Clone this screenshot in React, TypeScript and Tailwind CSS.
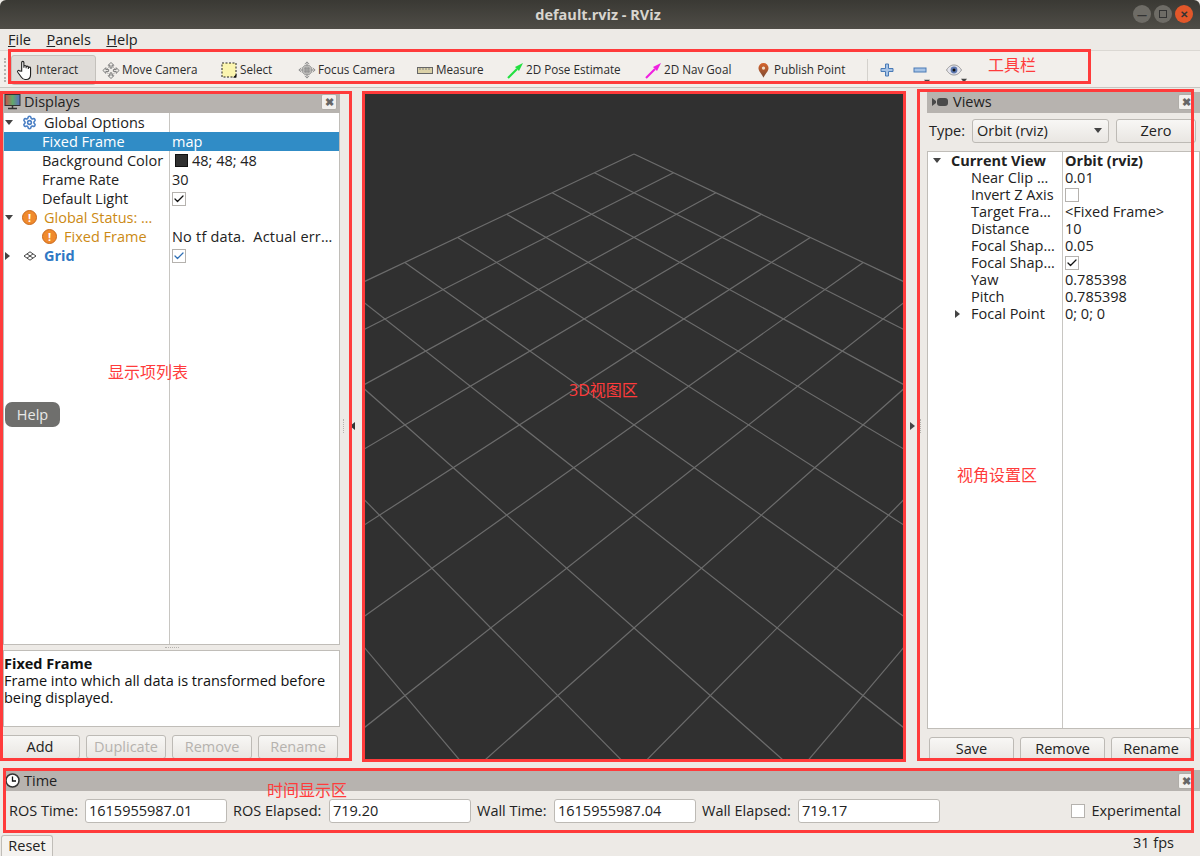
import { ReactNode } from "react";
import { Settings, Check } from "lucide-react";

const FONT = "font-['Open_Sans','Noto_Sans_CJK_SC',sans-serif]";

// projective map of the rviz ground grid, fitted to the picture
const project = (u: number, v: number) => {
  const w = 1 - 0.0333 * (u + v);
  return [270 + (38.2 * (v - u)) / w, 62 + (18.07 * (u + v)) / w];
};

function GroundGrid() {
  const lines = [];
  for (let i = 0; i <= 10; i++) {
    const [ax, ay] = project(i, 0);
    const [bx, by] = project(i, 10);
    const [cx, cy] = project(0, i);
    const [dx, dy] = project(10, i);
    lines.push(<line key={`u${i}`} x1={ax} y1={ay} x2={bx} y2={by} />);
    lines.push(<line key={`v${i}`} x1={cx} y1={cy} x2={dx} y2={dy} />);
  }
  return (
    <svg width="540" height="668" className="block" stroke="#6c6c6c" strokeWidth="1.2">
      {lines}
    </svg>
  );
}

function Hand() {
  return (
    <svg width="19" height="20" viewBox="2 1 15 18" fill="#fff" stroke="#222" strokeWidth="1">
      <path d="M6.500 11V3.200c0-1.300 2-1.300 2 0V8V6.800c0-1.200 2-1.200 2 0V8.500V7.400c0-1.200 2-1.200 2 0V9V8.200c0-1.100 2-1.100 2 0V14c0 2.600-1.600 4.500-4 4.500H9.500c-1.600 0-2.500-.9-3.400-2.200L3 12c-.8-1.200.7-2.200 1.600-1.200z" />
    </svg>
  );
}

function MoveCamera() {
  return (
    <svg width="19" height="19" viewBox="0 0 19 19" fill="#eeece8" stroke="#777" strokeWidth="1">
      <circle cx="9.500" cy="9.500" r="4.500" fill="none" strokeDasharray="1.500 1" />
      <path d="M9.500 1l3 3h-2v3h-2V4h-2zM9.500 18l3-3h-2v-3h-2v3h-2zM1 9.500l3-3v2h3v2H4v2zM18 9.500l-3-3v2h-3v2h3v2z" />
    </svg>
  );
}

function SelectIcon() {
  return (
    <svg width="16" height="16" viewBox="0 0 16 16">
      <rect x="1" y="1" width="14" height="14" fill="#fbf5b0" stroke="#222" strokeDasharray="2 1.500" />
      <path d="M12 15.500L15.500 12V15.500z" fill="#111" />
    </svg>
  );
}

function FocusCamera() {
  return (
    <svg width="20" height="20" viewBox="0 0 20 20" fill="none" stroke="#8a8a8a" strokeWidth="1">
      <circle cx="10" cy="10" r="5.500" fill="#dcdad6" />
      <path d="M10 1v18M1 10h18M7.500 3.500L10 1l2.500 2.500M7.500 16.500L10 19l2.500-2.500M3.500 7.500L1 10l2.500 2.500M16.500 7.500L19 10l-2.500 2.500M6 8h8M6 12h8M8 6v8M12 6v8" />
    </svg>
  );
}

function Ruler() {
  return (
    <svg width="16" height="7" viewBox="0 0 16 7">
      <rect x="0.500" y="0.500" width="15" height="6" fill="#dcd2a8" stroke="#666" />
      <path d="M3 1v2M6 1v2M9 1v2M12 1v2" stroke="#888" />
    </svg>
  );
}

function Arrow({ color }: { color: string }) {
  return (
    <svg width="17" height="17" viewBox="0 0 17 17">
      <path d="M1 16L10 7" stroke={color} strokeWidth="2.200" />
      <path d="M16 1L8 5L12 9z" fill={color} />
    </svg>
  );
}

function Pin() {
  return (
    <svg width="11" height="17" viewBox="0 0 12 17">
      <defs>
        <linearGradient id="pin" x1="0" x2="0" y1="0" y2="1">
          <stop offset="0" stopColor="#d8642c" />
          <stop offset="1" stopColor="#7a4a34" />
        </linearGradient>
      </defs>
      <path d="M6 16.500C4.500 12.500 .500 9.500 .500 5.800a5.500 5.500 0 0111 0C11.500 9.500 7.500 12.500 6 16.500z" fill="url(#pin)" />
      <circle cx="6" cy="5.800" r="1.800" fill="#f0dcc8" />
    </svg>
  );
}

function PlusIcon() {
  return (
    <svg width="14" height="14" viewBox="0 0 14 14">
      <path d="M5.500 1h3v4.500H13v3H8.500V13h-3V8.500H1v-3h4.500z" fill="#a6c3e6" stroke="#4a7ab5" />
    </svg>
  );
}

function MinusIcon() {
  return (
    <svg width="14" height="6" viewBox="0 0 14 6">
      <rect x="1" y="1" width="12" height="4" fill="#a6c3e6" stroke="#4a7ab5" />
    </svg>
  );
}

function EyeIcon() {
  return (
    <svg width="16" height="12" viewBox="0 0 16 12">
      <path d="M.500 6C3 2 5.500 1 8 1s5 1 7.500 5C13 10 10.500 11 8 11S3 10 .500 6z" fill="#e4e4ec" stroke="#999" />
      <circle cx="8" cy="6" r="3.400" fill="#5d78b0" />
      <circle cx="8" cy="6" r="1.500" fill="#111" />
    </svg>
  );
}

function Monitor() {
  return (
    <svg width="17" height="16" viewBox="0 0 17 16">
      <defs>
        <linearGradient id="scr" x1="0" x2="1" y1="0" y2="0">
          <stop offset="0" stopColor="#c9504a" />
          <stop offset="0.500" stopColor="#63a86a" />
          <stop offset="1" stopColor="#5a6cc0" />
        </linearGradient>
      </defs>
      <rect x="1" y="0.500" width="15" height="11" fill="url(#scr)" stroke="#333" />
      <path d="M8.500 12v2M4 14.500h9" stroke="#333" strokeWidth="1.500" />
    </svg>
  );
}

function CameraIcon() {
  return (
    <svg width="16" height="10" viewBox="0 0 16 10" fill="#4a4a4a">
      <path d="M0 1l4 3V6L0 9z" />
      <rect x="5" y="1" width="11" height="8" rx="3" />
    </svg>
  );
}

function ClockIcon() {
  return (
    <svg width="15" height="15" viewBox="0 0 15 15">
      <circle cx="7.500" cy="7.500" r="6.500" fill="#fff" stroke="#333" strokeWidth="1.500" />
      <path d="M7.500 3.500v4.500h3.500" fill="none" stroke="#111" strokeWidth="1.300" />
    </svg>
  );
}

function Warn({ className = "" }: { className?: string }) {
  return (
    <span className={`flex h-[15px] w-[15px] flex-none items-center justify-center rounded-full border border-[#c9691c] bg-[#f08a2c] text-[11px] leading-none font-bold text-white ${className}`}>
      !
    </span>
  );
}

function GridIcon() {
  return (
    <svg width="14" height="10" viewBox="0 0 14 10" fill="none" stroke="#444">
      <path d="M7 .800L13 5L7 9.200L1 5zM4 2.900L10 7.100M10 2.900L4 7.100" />
    </svg>
  );
}

function Down({ className = "" }: { className?: string }) {
  return <span className={`h-0 w-0 flex-none border-x-[4px] border-t-[5px] border-x-transparent border-t-[#444] ${className}`} />;
}

function Right({ className = "" }: { className?: string }) {
  return <span className={`h-0 w-0 flex-none border-y-[4px] border-l-[5px] border-y-transparent border-l-[#444] ${className}`} />;
}

function CloseBox() {
  return (
    <span className="flex h-[16px] w-[16px] flex-none items-center justify-center rounded-[2px] border border-[#b0ada8] bg-[#f2f0ed] text-[11px] leading-none font-bold text-[#666]">
      ✖
    </span>
  );
}

function Dots({ className }: { className: string }) {
  return <span className={`flex-none border-[#b5b2ae] ${className}`} />;
}

function Tool({ icon, label, active, width }: { icon: ReactNode; label: string; active?: boolean; width: string }) {
  return (
    <div className={`flex h-[30px] flex-none items-center gap-[2px] text-[11.7px] text-[#2c2c2c] ${width} ${active ? "rounded-[3px] border border-[#c4c1bc] bg-[#dfdcd8] pl-[4px]" : "pl-[6px]"}`}>
      <span className="flex w-[18px] flex-none justify-center">{icon}</span>
      {label}
    </div>
  );
}

function PanelTitle({ icon, title, className, iconBox = "w-[18px]" }: { icon: ReactNode; title: string; className: string; iconBox?: string }) {
  return (
    <div className={`flex h-[21px] flex-none items-center justify-between bg-[#b7b3af] text-[14.500px] text-[#222] ${className}`}>
      <div className="flex items-center gap-[3px]">
        <span className={`flex justify-center ${iconBox}`}>{icon}</span>
        {title}
      </div>
      <CloseBox />
    </div>
  );
}

function QtButton({ children, disabled, width }: { children: ReactNode; disabled?: boolean; width: string }) {
  return (
    <div className={`flex h-[24px] flex-none items-center justify-center rounded-[3px] border border-[#bdbab5] bg-gradient-to-b from-[#f8f7f5] to-[#e9e6e2] text-[14.500px] ${width} ${disabled ? "text-[#b5b2ae]" : "text-[#222]"}`}>
      {children}
    </div>
  );
}

function Box({ checked, blue }: { checked?: boolean; blue?: boolean }) {
  return (
    <span className="flex h-[14px] w-[14px] flex-none items-center justify-center border border-[#b5b2ae] bg-white">
      {checked && <Check size={12} strokeWidth={2.500} color={blue ? "#2f6fb5" : "#111"} />}
    </span>
  );
}

function DisplayRow({ left, right, indent, selected }: { left: ReactNode; right?: ReactNode; indent: string; selected?: boolean }) {
  return (
    <div className={`flex h-[19px] items-center text-[14.500px] ${selected ? "bg-[#308cc6] text-white" : "text-[#222]"}`}>
      <div className={`flex w-[166px] flex-none items-center overflow-hidden whitespace-pre ${indent}`}>{left}</div>
      <div className="flex min-w-0 flex-1 items-center pl-[2px] whitespace-pre">{right}</div>
    </div>
  );
}

function ViewRow({ left, right, bold, arrow }: { left: string; right: ReactNode; bold?: boolean; arrow?: ReactNode }) {
  return (
    <div className={`flex h-[17px] items-center text-[14.500px] text-[#222] ${bold ? "font-bold" : ""}`}>
      <div className={`relative flex w-[134px] flex-none items-center whitespace-nowrap ${bold ? "pl-[23px]" : "pl-[43px]"}`}>
        {arrow}
        {left}
      </div>
      <div className="flex items-center pl-[3px] whitespace-nowrap">{right}</div>
    </div>
  );
}

function TimeField({ label, value, labelWidth }: { label: string; value: string; labelWidth: string }) {
  return (
    <div className="flex items-center gap-[7px]">
      <span className={`text-[14.500px] whitespace-nowrap text-[#222] ${labelWidth}`}>{label}</span>
      <div className="flex h-[24px] w-[142px] items-center rounded-[3px] border border-[#bdbab5] bg-white pl-[3px] text-[14.500px] text-[#222]">{value}</div>
    </div>
  );
}

function Outline({ className }: { className: string }) {
  return <div className={`pointer-events-none absolute border-[3px] border-[#ff3b3b] ${className}`} />;
}

function Note({ className, children }: { className: string; children: ReactNode }) {
  return <div className={`pointer-events-none absolute text-[16px] leading-none text-[#ff3b3b] ${className}`}>{children}</div>;
}

export default function App() {
  return (
    <div className={`relative flex h-[856px] w-[1200px] flex-col overflow-hidden bg-[#edeae6] ${FONT}`}>
      {/* window title */}
      <div className="relative flex h-[29px] flex-none items-center justify-center rounded-t-[6px] bg-gradient-to-b from-[#3a3934] to-[#4f4d47] pr-[4px] text-[14.500px] font-bold text-[#d8d5cf]">
        default.rviz - RViz
        <div className="absolute top-[5px] right-[7px] flex gap-[3px]">
          <span className="flex h-[18px] w-[18px] items-center justify-center rounded-full bg-[#6e6c66] text-[10px] text-[#333]">—</span>
          <span className="flex h-[18px] w-[18px] items-center justify-center rounded-full bg-[#6e6c66]"><span className="h-[8px] w-[8px] border border-[#333]" /></span>
          <span className="flex h-[18px] w-[18px] items-center justify-center rounded-full bg-[#e2572a] text-[10px] text-[#333]">✕</span>
        </div>
      </div>

      {/* menu */}
      <div className="flex h-[21px] flex-none items-center gap-[15.5px] pl-[8px] text-[14.500px] text-[#222]">
        <span><u>F</u>ile</span>
        <span><u>P</u>anels</span>
        <span><u>H</u>elp</span>
      </div>

      {/* toolbar */}
      <div className="flex h-[38px] flex-none items-center border-t border-b border-t-[#dbd8d3] border-b-[#c8c5c0] bg-[#f2efeb] pt-[2px]">
        <Dots className="mr-[5px] ml-[4px] h-[24px] border-l-2 border-dotted" />
        <Tool active icon={<Hand />} label="Interact" width="w-[85px]" />
        <Tool icon={<MoveCamera />} label="Move Camera" width="w-[118px]" />
        <Tool icon={<SelectIcon />} label="Select" width="w-[78px]" />
        <Tool icon={<FocusCamera />} label="Focus Camera" width="w-[118px]" />
        <Tool icon={<Ruler />} label="Measure" width="w-[90px]" />
        <Tool icon={<Arrow color="#22e040" />} label="2D Pose Estimate" width="w-[138px]" />
        <Tool icon={<Arrow color="#f020e0" />} label="2D Nav Goal" width="w-[110px]" />
        <Tool icon={<Pin />} label="Publish Point" width="w-[119px]" />
        <span className="h-[22px] w-px bg-[#d4d1cc]" />
        <div className="ml-[12px] flex items-center">
          <span className="w-[33px]"><PlusIcon /></span>
          <span className="relative w-[33px]"><MinusIcon /><Down className="absolute top-[12px] left-[10px] scale-75" /></span>
          <span className="relative w-[33px]"><EyeIcon /><Down className="absolute top-[14px] left-[14px] scale-75" /></span>
        </div>
      </div>

      {/* panels */}
      <div className="mt-[4px] flex h-[670px] flex-none">
        <div className="ml-[3px] flex w-[337px] flex-none flex-col">
          <PanelTitle icon={<Monitor />} title="Displays" className="pr-[3px] pb-[2px]" />
          <div className="flex h-[532px] flex-none flex-col border border-t-0 border-[#c0bdb8] bg-white bg-[linear-gradient(#c8c6c2,#c8c6c2)] bg-[length:1px_100%] bg-[position:165px_0] bg-no-repeat">
            <DisplayRow indent="pl-[1px]" left={<><Down className="mr-[9px]" /><Settings size={15} color="#4a7fc4" strokeWidth={2.500} className="mr-[7px] flex-none" />Global Options</>} />
            <DisplayRow selected indent="pl-[38px]" left="Fixed Frame" right="map" />
            <DisplayRow indent="pl-[38px]" left="Background Color" right={<><span className="mr-[4px] ml-[3px] h-[13px] w-[13px] border border-[#111] bg-[#303030]" />48; 48; 48</>} />
            <DisplayRow indent="pl-[38px]" left="Frame Rate" right="30" />
            <DisplayRow indent="pl-[38px]" left="Default Light" right={<Box checked />} />
            <DisplayRow indent="pl-[1px]" left={<span className="flex items-center text-[#cc8a14]"><Down className="mr-[9px]" /><Warn className="mr-[7px]" />Global Status: …</span>} />
            <DisplayRow indent="pl-[38px]" left={<span className="flex items-center text-[#cc8a14]"><Warn className="mr-[7px]" />Fixed Frame</span>} right={<span className="tracking-[0.2px]">No tf data.  Actual err…</span>} />
            <DisplayRow indent="pl-[1px]" left={<span className="flex items-center font-bold text-[#2f78c4]"><Right className="mr-[13px]" /><span className="mr-[7px]"><GridIcon /></span>Grid</span>} right={<Box checked blue />} />
          </div>
          <div className="flex h-[5px] flex-none items-center justify-center">
            <Dots className="h-0 w-[14px] border-t border-dotted" />
          </div>
          <div className="h-[77px] flex-none border border-[#c0bdb8] bg-white pt-[4px] text-[14.500px] leading-[17px] text-[#111]">
            <b>Fixed Frame</b>
            <br />
            Frame into which all data is transformed before being displayed.
          </div>
          <div className="mt-[8px] -ml-[3px] flex gap-[6px]">
            <QtButton width="w-[80px]">Add</QtButton>
            <QtButton disabled width="w-[80px]">Duplicate</QtButton>
            <QtButton disabled width="w-[80px]">Remove</QtButton>
            <QtButton disabled width="w-[80px]">Rename</QtButton>
          </div>
        </div>

        {/* splitter */}
        <div className="flex h-[668px] w-[24px] flex-none items-center pl-[3px]">
          <Dots className="h-[14px] border-l border-dotted" />
          <span className="ml-[6px] h-0 w-0 border-y-[4px] border-r-[5px] border-y-transparent border-r-[#333]" />
        </div>

        {/* 3D view */}
        <div className="h-[668px] w-[540px] flex-none overflow-hidden bg-[#303030]">
          <GroundGrid />
        </div>

        {/* splitter */}
        <div className="flex h-[668px] w-[23px] flex-none items-center pl-[6px]">
          <Right className="border-l-[#333]" />
          <Dots className="ml-[5px] h-[14px] border-l border-dotted" />
        </div>

        <div className="flex min-w-0 flex-1 flex-col">
          <PanelTitle icon={<CameraIcon />} title="Views" className="pr-[6px] pb-[2px]" iconBox="w-[23px] pl-[3px]" />
          <div className="flex h-[38px] flex-none items-center pb-[3px]">
            <span className="ml-[2px] w-[43px] text-[14.500px] text-[#222]">Type:</span>
            <div className="flex h-[24px] w-[137px] items-center justify-between rounded-[3px] border border-[#bdbab5] bg-gradient-to-b from-[#f8f7f5] to-[#e9e6e2] pr-[6px] pl-[4px] text-[14.500px] text-[#222]">
              Orbit (rviz)
              <Down />
            </div>
            <QtButton width="w-[80px] ml-[7px]">Zero</QtButton>
          </div>
          <div className="flex h-[578px] flex-none flex-col border border-[#c0bdb8] bg-white bg-[linear-gradient(#c8c6c2,#c8c6c2)] bg-[length:1px_100%] bg-[position:134px_0] bg-no-repeat">
            <ViewRow bold left="Current View" right="Orbit (rviz)" arrow={<Down className="absolute left-[5px]" />} />
            <ViewRow left="Near Clip …" right="0.01" />
            <ViewRow left="Invert Z Axis" right={<Box />} />
            <ViewRow left="Target Fra…" right="<Fixed Frame>" />
            <ViewRow left="Distance" right="10" />
            <ViewRow left="Focal Shap…" right="0.05" />
            <ViewRow left="Focal Shap…" right={<Box checked />} />
            <ViewRow left="Yaw" right="0.785398" />
            <ViewRow left="Pitch" right="0.785398" />
            <ViewRow left="Focal Point" right="0; 0; 0" arrow={<Right className="absolute left-[27px]" />} />
          </div>
          <div className="mt-[8px] ml-[2px] flex gap-[6px]">
            <QtButton width="w-[85px]">Save</QtButton>
            <QtButton width="w-[85px]">Remove</QtButton>
            <QtButton width="w-[80px]">Rename</QtButton>
          </div>
        </div>
      </div>

      {/* time */}
      <div className="mt-[8px] flex h-[62px] flex-none flex-col pl-[3px]">
        <PanelTitle icon={<ClockIcon />} title="Time" className="pr-[6px]" />
        <div className="flex h-[39px] items-center gap-[6px] pl-[6px]">
          <TimeField label="ROS Time:" value="1615955987.01" labelWidth="w-[69px]" />
          <TimeField label="ROS Elapsed:" value="719.20" labelWidth="w-[89px]" />
          <TimeField label="Wall Time:" value="1615955987.04" labelWidth="w-[70px]" />
          <TimeField label="Wall Elapsed:" value="719.17" labelWidth="w-[89px]" />
          <div className="ml-auto flex items-center gap-[6px] pr-[19px] text-[14.500px] text-[#222]">
            <Box />
            Experimental
          </div>
        </div>
      </div>

      {/* status */}
      <div className="mt-[3px] flex flex-1 items-end justify-between pl-[1px] text-[14.500px] text-[#222]">
        <div className="flex h-[21px] w-[52px] items-center justify-center rounded-t-[3px] border border-b-0 border-[#c0bdb8] bg-[#f4f2ef]">Reset</div>
        <span className="mr-[26px] mb-[5px] leading-[16px]">31 fps</span>
      </div>

      {/* help button sits over the displays tree */}
      <div className="absolute top-[402px] left-[5px] flex h-[25px] w-[55px] items-center justify-center rounded-[7px] bg-[#6f6f6d] text-[14.500px] text-[#e8e8e8]">Help</div>

      {/* red annotations drawn over the shot */}
      <Outline className="top-[49px] left-[8px] h-[35px] w-[1083px]" />
      <Outline className="top-[91px] left-[0px] h-[670px] w-[352px]" />
      <Outline className="top-[91px] left-[362px] h-[671px] w-[544px]" />
      <Outline className="top-[89px] left-[917px] h-[672px] w-[277px]" />
      <Outline className="top-[768px] left-[3px] h-[65px] w-[1191px]" />
      <Note className="top-[57px] left-[988px]">工具栏</Note>
      <Note className="top-[364px] left-[108px]">显示项列表</Note>
      <Note className="top-[382px] left-[569px]">3D视图区</Note>
      <Note className="top-[467px] left-[957px]">视角设置区</Note>
      <Note className="top-[782px] left-[267px]">时间显示区</Note>
    </div>
  );
}
